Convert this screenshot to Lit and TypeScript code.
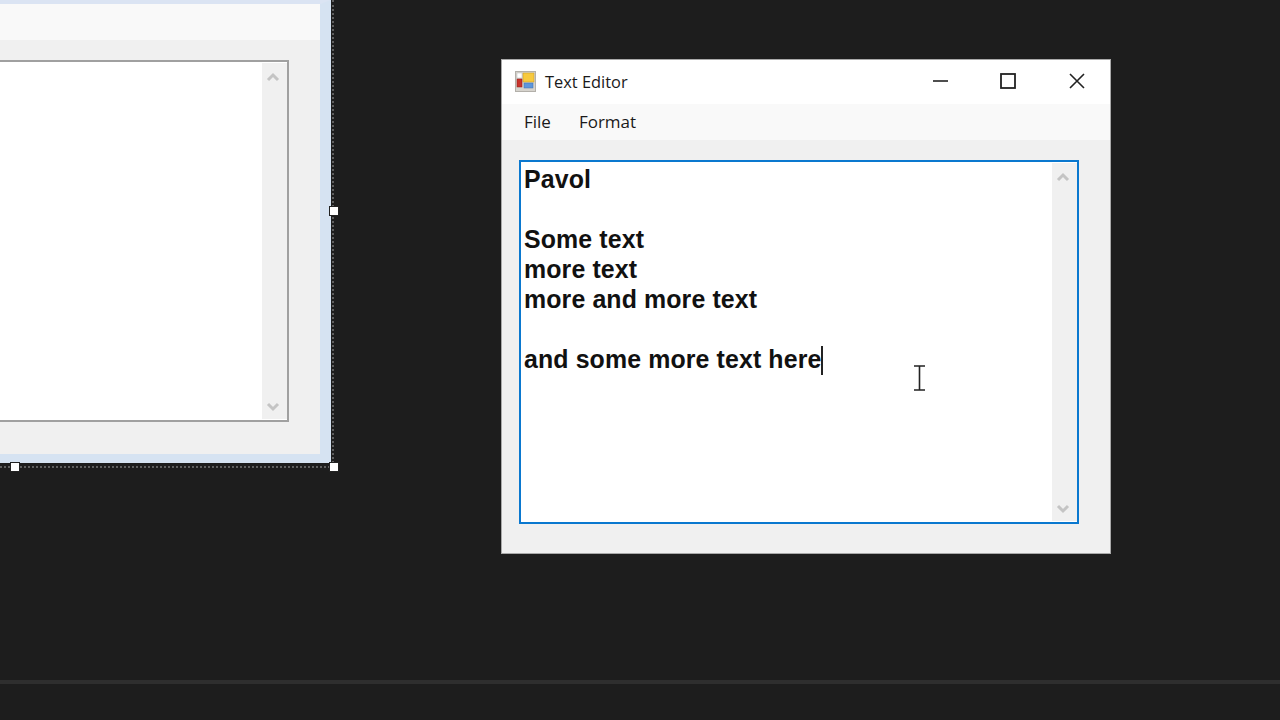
import { LitElement, html, css, svg } from 'lit'
import { customElement } from 'lit/decorators.js'

const chevron = (up: boolean) => html`
  <svg class="chev" width="14" height="10" viewBox="0 0 14 10">
    <path d=${up ? 'M2 8 L7 3 L12 8' : 'M2 2 L7 7 L12 2'} fill="none" stroke="#c4c4c4" stroke-width="3" />
  </svg>
`

const appIcon = svg`
  <rect x="0.5" y="0.5" width="20" height="20" fill="#d6d3cd" stroke="#b3b0aa" />
  <rect x="2" y="2" width="5" height="5" fill="#fff" stroke="#bbb" stroke-width="0.5" />
  <rect x="8" y="2" width="11" height="9" fill="#f7c93e" stroke="#c79a20" stroke-width="0.5" />
  <rect x="2" y="8" width="5" height="8" fill="#c8322b" stroke="#8e1f1a" stroke-width="0.5" />
  <rect x="9" y="12" width="9" height="5" fill="#5d96dc" stroke="#3d6fb0" stroke-width="0.5" />
`

@customElement('app-root')
export class AppRoot extends LitElement {
  static styles = css`
    :host {
      display: block;
      width: 1280px;
      height: 720px;
      overflow: hidden;
    }

    .canvas {
      position: relative;
      width: 1280px;
      height: 720px;
      overflow: hidden;
      background: #1d1d1d;
      display: flex;
      flex-direction: column;
    }

    .status-rule {
      margin-top: 680px;
      height: 4px;
      background: #2e2e2e;
    }

    /* Form in the designer, cut off by the left edge */
    .design-form {
      position: absolute;
      left: -40px;
      top: 0;
      width: 360px;
      height: 450px;
      box-sizing: content-box;
      border-top: 4px solid #dbe4f3;
      border-right: 11px solid #d6e3f2;
      border-bottom: 9px solid #d6e3f2;
      background: #f0f0f0;
      display: flex;
      flex-direction: column;
    }

    .design-menu {
      height: 36px;
      flex: none;
      background: #f9f9f9;
    }

    .design-body {
      padding: 20px 31px 32px 0;
      flex: 1;
      display: flex;
      min-height: 0;
    }

    .selection-right {
      position: absolute;
      left: 332px;
      top: 0;
      height: 467px;
      width: 0;
      border-left: 2px dotted #5f5f5f;
    }

    .selection-bottom {
      position: absolute;
      left: 0;
      top: 466px;
      width: 334px;
      height: 0;
      border-top: 2px dotted #5f5f5f;
    }

    .handle {
      position: absolute;
      width: 8px;
      height: 8px;
      background: #fff;
      border: 1px solid #222;
      box-sizing: content-box;
    }

    .h1 { left: 329px; top: 206px; }
    .h2 { left: 329px; top: 462px; }
    .h3 { left: 10px; top: 462px; }

    .textbox {
      flex: 1;
      display: flex;
      background: #fff;
      box-sizing: border-box;
      min-width: 0;
    }

    .textbox.idle {
      border: 2px solid #a0a0a0;
      border-left: 0;
    }

    .textbox.focus {
      border: 2px solid #0a78cf;
    }

    .content {
      flex: 1;
      min-width: 0;
    }

    .scroll {
      flex: none;
      width: 25px;
      box-sizing: border-box;
      background: #f0f0f0;
      display: flex;
      flex-direction: column;
      justify-content: space-between;
      align-items: center;
      padding: 9px 4px 7px 0;
      margin: 1px 0;
    }

    .chev {
      display: block;
    }

    /* Running window */
    .window {
      position: absolute;
      left: 501px;
      top: 59px;
      width: 610px;
      height: 495px;
      box-sizing: border-box;
      border: 1px solid #a9a9a9;
      background: #f0f0f0;
      display: flex;
      flex-direction: column;
      font-family: 'Open Sans', 'Noto Sans', sans-serif;
      color: #1a1a1a;
    }

    .titlebar {
      height: 44px;
      flex: none;
      background: #fff;
      display: flex;
      align-items: center;
      padding-left: 13px;
      font-size: 16.4px;
    }

    .titlebar svg.app {
      flex: none;
      margin-right: 9px;
      margin-top: -2px;
    }

    .title {
      flex: 1;
      margin-top: -2px;
    }

    .controls {
      display: flex;
      align-items: center;
      gap: 52px;
      padding-right: 25px;
      margin-top: -2px;
    }

    .controls svg {
      display: block;
    }

    .controls svg.close {
      margin-left: 1px;
    }

    .menubar {
      height: 34px;
      padding-bottom: 2px;
      flex: none;
      background: #f9f9f9;
      display: flex;
      align-items: center;
      gap: 28px;
      padding-left: 22px;
      font-size: 17px;
    }

    .editor-wrap {
      flex: 1;
      display: flex;
      padding: 20px 31px 29px 17px;
      min-height: 0;
    }

    .editor-text {
      padding: 2px 0 0 3px;
      font-family: 'Liberation Sans', Arial, sans-serif;
      font-size: 24.9px;
      letter-spacing: 0.12px;
      font-weight: 700;
      line-height: 30px;
      color: #111;
    }

    .line {
      height: 30px;
      white-space: pre;
    }

    .caret {
      display: inline-block;
      width: 1.5px;
      height: 29px;
      background: #222;
      vertical-align: -7px;
    }

    .cursor {
      position: absolute;
      left: 913px;
      top: 364px;
    }
  `

  render() {
    const lines = ['Pavol', '', 'Some text', 'more text', 'more and more text', '']
    return html`
      <div class="canvas">
        <div class="status-rule"></div>

        <div class="design-form">
          <div class="design-menu"></div>
          <div class="design-body">
            <div class="textbox idle">
              <div class="content"></div>
              <div class="scroll">${chevron(true)}${chevron(false)}</div>
            </div>
          </div>
        </div>
        <div class="selection-right"></div>
        <div class="selection-bottom"></div>
        <div class="handle h1"></div>
        <div class="handle h2"></div>
        <div class="handle h3"></div>

        <div class="window">
          <div class="titlebar">
            <svg class="app" width="21" height="21" viewBox="0 0 21 21">${appIcon}</svg>
            <span class="title">Text Editor</span>
            <div class="controls">
              <svg width="15" height="15" viewBox="0 0 15 15">
                <path d="M0 7 H15" stroke="#222" stroke-width="1.6" fill="none" />
              </svg>
              <svg width="16" height="16" viewBox="0 0 16 16">
                <rect x="1" y="1" width="14" height="14" stroke="#222" stroke-width="1.8" fill="none" />
              </svg>
              <svg class="close" width="16" height="16" viewBox="0 0 16 16">
                <path d="M1 1 L15 15 M15 1 L1 15" stroke="#222" stroke-width="1.6" fill="none" />
              </svg>
            </div>
          </div>
          <div class="menubar">
            <span>File</span>
            <span>Format</span>
          </div>
          <div class="editor-wrap">
            <div class="textbox focus">
              <div class="content editor-text">
                ${lines.map((l) => html`<div class="line">${l}</div>`)}
                <div class="line">and some more text here<span class="caret"></span></div>
              </div>
              <div class="scroll">${chevron(true)}${chevron(false)}</div>
            </div>
          </div>
        </div>

        <svg class="cursor" width="14" height="28" viewBox="0 0 14 28">
          <path d="M1 2 H12 M6.5 2 V26 M1 26 H12" stroke="#222" stroke-width="1.6" fill="none" />
        </svg>
      </div>
    `
  }
}

declare global {
  interface HTMLElementTagNameMap {
    'app-root': AppRoot
  }
}
